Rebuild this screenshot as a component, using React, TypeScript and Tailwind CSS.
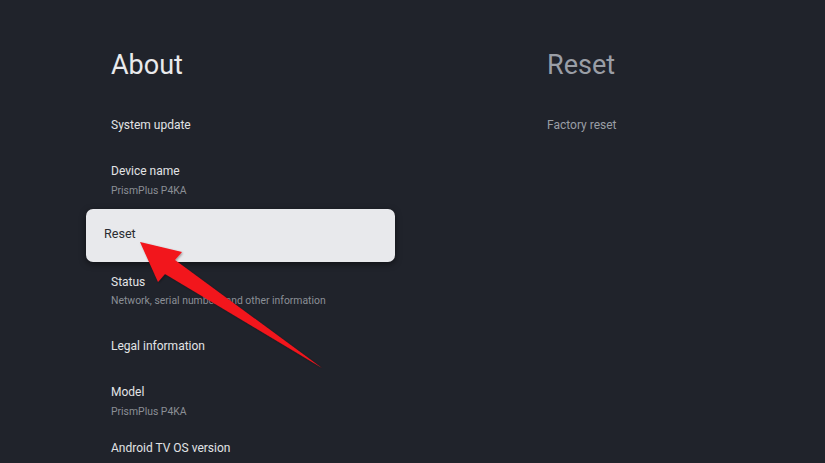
import React from "react";

const F = { fontFamily: "Roboto, 'Noto Sans', sans-serif" };

export default function App() {
  return (
    <div
      className="relative w-[825px] h-[463px] overflow-hidden bg-[#20232b] flex"
      style={F}
    >
      <div className="w-[436px] flex flex-col">
        <div className="ml-[111px] mt-[49px] h-[32px] leading-[32px] text-[27px] text-[#e9eaec]">About</div>
        <div className="ml-[111px] mt-[35px] h-[18px] leading-[18px] text-[12px] text-[#e2e3e6]">System update</div>
        <div className="ml-[111px] mt-[28px] h-[18px] leading-[18px] text-[12px] text-[#e2e3e6]">Device name</div>
        <div className="ml-[111px] mt-[3px] h-[16px] leading-[16px] text-[10.4px] text-[#8b8f96]">PrismPlus P4KA</div>
        <div className="ml-[86px] mt-[10px] w-[309px] h-[53px] rounded-[7px] bg-[#e8e9ec] shadow-[0_2px_6px_rgba(0,0,0,0.5)] pl-[18px] pt-[16px]">
          <div className="h-[18px] leading-[18px] text-[12.6px] text-[#2a2c31]">Reset</div>
        </div>
        <div className="ml-[111px] mt-[11px] h-[18px] leading-[18px] text-[12px] text-[#e2e3e6]">Status</div>
        <div className="ml-[111px] mt-[2px] h-[16px] leading-[16px] text-[10.4px] text-[#8b8f96]">Network, serial numbers and other information</div>
        <div className="ml-[111px] mt-[28px] h-[18px] leading-[18px] text-[12px] text-[#e2e3e6]">Legal information</div>
        <div className="ml-[111px] mt-[28px] h-[18px] leading-[18px] text-[12px] text-[#e2e3e6]">Model</div>
        <div className="ml-[111px] mt-[3px] h-[16px] leading-[16px] text-[10.4px] text-[#8b8f96]">PrismPlus P4KA</div>
        <div className="ml-[111px] mt-[19px] h-[18px] leading-[18px] text-[12px] text-[#e2e3e6]">Android TV OS version</div>
      </div>
      <div className="flex flex-col">
        <div className="ml-[111px] mt-[49px] h-[32px] leading-[32px] text-[27px] text-[#9a9ea6]">Reset</div>
        <div className="ml-[111px] mt-[35px] h-[18px] leading-[18px] text-[12px] text-[#9a9ea5]">Factory reset</div>
      </div>
      <svg className="absolute left-0 top-0" width="825" height="463" viewBox="0 0 825 463">
        <defs>
          <filter id="sh" x="-20%" y="-20%" width="140%" height="140%">
            <feDropShadow dx="1" dy="1" stdDeviation="1" floodColor="#000" floodOpacity="0.35" />
          </filter>
        </defs>
        <polygon
          points="140,242 182,252 175,260 322,368 165,274 158,282"
          fill="#f2141c"
          filter="url(#sh)"
        />
      </svg>
    </div>
  );
}
